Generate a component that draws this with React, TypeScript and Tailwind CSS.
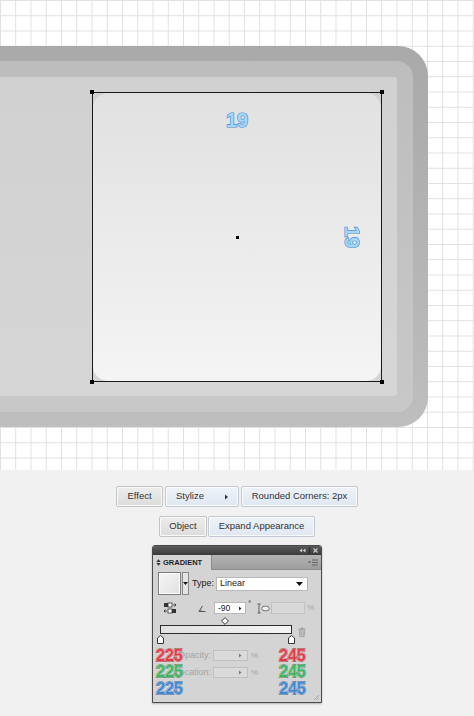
import React from 'react'

// small drawings used in the gradient panel
function ReverseIcon() {
  return (
    <svg width="14" height="12" viewBox="0 0 14 12">
      <rect x="1" y="1" width="4" height="4" fill="#333" />
      <rect x="5" y="1" width="4" height="4" fill="#fff" stroke="#333" strokeWidth="0.8" />
      <path d="M10 3h3M11.6 1.6 13 3l-1.4 1.4" stroke="#333" strokeWidth="0.9" fill="none" />
      <path d="M1 9h3M2.4 7.6 1 9l1.4 1.4" stroke="#333" strokeWidth="0.9" fill="none" />
      <rect x="5" y="7" width="4" height="4" fill="#fff" stroke="#333" strokeWidth="0.8" />
      <rect x="9" y="7" width="4" height="4" fill="#333" />
    </svg>
  )
}

function AngleIcon() {
  return (
    <svg width="8" height="7" viewBox="0 0 8 7">
      <path d="M1 6.5h6.5M1 6.5 4.5 1" stroke="#444" strokeWidth="0.9" fill="none" />
      <path d="M3 6.5a2.2 2.2 0 0 0-0.6-2" stroke="#444" strokeWidth="0.8" fill="none" />
    </svg>
  )
}

function AspectIcon() {
  return (
    <svg width="13" height="11" viewBox="0 0 13 11">
      <path d="M2 1v9M0.5 1h3M0.5 10h3" stroke="#555" strokeWidth="0.9" fill="none" />
      <ellipse cx="8.5" cy="5.5" rx="3.8" ry="2.4" fill="#eee" stroke="#666" strokeWidth="0.9" />
    </svg>
  )
}

function TrashIcon() {
  return (
    <svg width="8" height="10" viewBox="0 0 8 10">
      <path d="M0.5 2h7M3 2V1h2v1" stroke="#999" strokeWidth="0.8" fill="none" />
      <path d="M1.3 2.8h5.4l-0.5 6.7H1.8z" fill="#c8c8c8" stroke="#999" strokeWidth="0.8" />
      <path d="M3 4v4.5M5 4v4.5" stroke="#999" strokeWidth="0.6" />
    </svg>
  )
}

function StopIcon() {
  return (
    <svg width="7" height="9" viewBox="0 0 7 9">
      <path d="M3.5 0.5 6.5 3v5.5h-6V3z" fill="#fff" stroke="#222" strokeWidth="0.9" />
    </svg>
  )
}

function Btn({ w, blue, children }: { w: string; blue?: boolean; children: React.ReactNode }) {
  return (
    <div
      className={`${w} h-full flex items-center justify-center rounded-[2px] border text-[9.5px] text-[#333] shadow-[inset_0_0_0_1px_#fafafa] ${
        blue
          ? 'border-[#c2c9d2] bg-linear-to-b from-[#eef3f9] to-[#dfe7f1]'
          : 'border-[#c4c4c4] bg-linear-to-b from-[#ededed] to-[#dcdcdc]'
      }`}
    >
      {children}
    </div>
  )
}

function Key() {
  return (
    <div className="relative w-[290px] h-[290px] p-px">
      <div className="h-full rounded-[15px] bg-linear-to-b from-[#e1e1e1] to-[#f4f4f4]" />

      {/* selection box */}
      <div className="absolute inset-0 border border-[#1a1a1a]" />
      <div className="absolute -left-[2px] -top-[2px] w-[4px] h-[4px] bg-black" />
      <div className="absolute -right-[2px] -top-[2px] w-[4px] h-[4px] bg-black" />
      <div className="absolute -left-[2px] -bottom-[2px] w-[4px] h-[4px] bg-black" />
      <div className="absolute -right-[2px] -bottom-[2px] w-[4px] h-[4px] bg-black" />
      <div className="absolute left-[144px] top-[144px] w-[3px] h-[3px] bg-black" />

      {/* size labels */}
      <div className="absolute left-0 top-[18px] w-full text-center text-[20px] leading-none font-bold text-[#a9d4f4] [-webkit-text-stroke:1.2px_#3d8fd4] [paint-order:stroke_fill]">
        19
      </div>
      <div className="absolute left-[260px] top-[145px] -translate-x-1/2 -translate-y-1/2 rotate-90 text-[20px] leading-none font-bold text-[#a9d4f4] [-webkit-text-stroke:1.2px_#3d8fd4] [paint-order:stroke_fill]">
        19
      </div>
    </div>
  )
}

function Canvas() {
  return (
    <div className="h-[470px] pt-[46px] bg-white bg-[linear-gradient(to_right,#e0e0e0_1px,transparent_1px),linear-gradient(to_bottom,#e0e0e0_1px,transparent_1px)] bg-[size:15.25px_15.25px]">
      <div className="w-[428px] h-[381px] rounded-r-[30px] bg-linear-to-b from-[#a9a9a9] to-[#bebebe] py-[15px] pr-[15px]">
        <div className="h-full rounded-r-[16px] bg-linear-to-b from-[#bdbdbd] to-[#c8c8c8] py-[16px] pr-[16px]">
          <div className="h-full rounded-r-[3px] bg-linear-to-b from-[#d1d1d1] to-[#d6d6d6] pl-[92px] pt-[15px]">
            <Key />
          </div>
        </div>
      </div>
    </div>
  )
}

const num = 'absolute text-[16px] leading-none font-bold [paint-order:stroke_fill] [text-shadow:0_0_1px_#fff,0_0_2px_#fff]'

function GradientPanel() {
  return (
    <div className="w-[170px] h-[158px] flex flex-col rounded-t-[3px] border border-[#4a4a4a] bg-[#d4d4d4] text-[9px] text-[#222] shadow-[0_1px_2px_rgba(0,0,0,0.25)]">
      {/* title bar */}
      <div className="h-[9px] rounded-t-[2px] bg-linear-to-b from-[#5a5a5a] to-[#3b3b3b] flex items-center justify-end pr-[3px] gap-[3px]">
        <svg width="7" height="5" viewBox="0 0 7 5">
          <path d="M3.2 0.5v4L0.5 2.5zM6.5 0.5v4L3.8 2.5z" fill="#cfcfcf" />
        </svg>
        <div className="w-px h-[7px] bg-[#2a2a2a]" />
        <svg width="5" height="5" viewBox="0 0 5 5">
          <path d="M0.5 0.5l4 4M4.5 0.5l-4 4" stroke="#d0d0d0" strokeWidth="1.1" />
        </svg>
      </div>

      {/* tab row */}
      <div className="h-[15px] flex">
        <div className="w-[58px] bg-[#d4d4d4] flex items-center pl-[3px] gap-[2px] font-bold text-[7.5px] text-[#1e1e1e]">
          <svg width="5" height="7" viewBox="0 0 5 7">
            <path d="M2.5 0.3 4.7 3H0.3zM2.5 6.7 4.7 4H0.3z" fill="#333" />
          </svg>
          GRADIENT
        </div>
        <div className="flex-1 flex justify-end items-center pr-[3px] bg-linear-to-b from-[#b3b3b3] to-[#9d9d9d] border-b border-l border-[#8c8c8c]">
          <svg width="10" height="7" viewBox="0 0 10 7">
            <path d="M0 2.5h3L1.5 4z" fill="#444" />
            <path d="M4 1h6M4 3.5h6M4 6h6" stroke="#666" strokeWidth="1.2" />
          </svg>
        </div>
      </div>

      {/* body */}
      <div className="flex-1 relative pl-[5px]">
        <div className="mt-[2px] h-[23px] flex items-center">
          <div className="w-[23px] h-[23px] border border-[#7c7c7c] bg-linear-to-br from-[#f6f6f6] to-[#e0e0e0] shadow-[inset_0_0_0_1px_#fff]" />
          <div className="ml-[1px] w-[7px] h-[23px] border border-[#8a8a8a] bg-[#e4e4e4] flex items-center justify-center">
            <svg width="5" height="3" viewBox="0 0 5 3">
              <path d="M0 0h5L2.5 3z" fill="#111" />
            </svg>
          </div>
          <div className="ml-[3px] w-[24px]">Type:</div>
          <div className="w-[92px] h-[14px] bg-white border border-[#b8b8b8] flex items-center pl-[3px] pr-[4px]">
            <span className="flex-1">Linear</span>
            <svg width="7" height="4" viewBox="0 0 7 4">
              <path d="M0 0h7L3.5 4z" fill="#111" />
            </svg>
          </div>
        </div>

        <div className="mt-[7px] h-[12px] flex items-center">
          <div className="ml-[5px]"><ReverseIcon /></div>
          <div className="ml-[21px]"><AngleIcon /></div>
          <div className="ml-[8px] w-[32px] h-[12px] bg-white border border-[#b8b8b8] flex items-center pl-[3px]">
            <span className="flex-1 text-[8.5px]">-90</span>
            <svg width="6" height="5" viewBox="0 0 6 5" className="mr-[2px]">
              <path d="M2 0.5v4l2.5-2z" fill="#333" />
            </svg>
          </div>
          <div className="ml-[2px] self-start text-[8px] leading-none -mt-[2px]">°</div>
          <div className="ml-[6px]"><AspectIcon /></div>
          <div className="ml-[1px] w-[34px] h-[12px] bg-[#d9d9d9] border border-[#c2c2c2]" />
          <div className="ml-[2px] text-[8px] text-[#a9a9a9]">%</div>
        </div>

        <div className="mt-[3px] h-[8px] flex items-center">
          <svg width="8" height="8" viewBox="0 0 8 8" className="ml-[63px]">
            <path d="M4 0.6 7.4 4 4 7.4 0.6 4z" fill="#fff" stroke="#222" strokeWidth="0.9" />
          </svg>
        </div>

        <div className="h-[10px] flex items-start">
          <div className="ml-[2px] w-[132px] h-[9px] border border-[#2d2d2d] bg-linear-to-r from-[#e1e1e1] to-[#f5f5f5]" />
          <div className="ml-[6px] mt-[2px]"><TrashIcon /></div>
        </div>

        <div className="h-[9px] flex">
          <div className="-ml-[1px]"><StopIcon /></div>
          <div className="ml-[124px]"><StopIcon /></div>
        </div>

        <div className="mt-[6px] h-[11px] flex items-center">
          <div className="w-[55px] text-right pr-[2px] text-[#a3a3a3]">Opacity:</div>
          <div className="w-[35px] h-[11px] bg-[#dadada] border border-[#c0c0c0] flex items-center justify-end pr-[4px]">
            <svg width="5" height="5" viewBox="0 0 5 5">
              <path d="M1 0.5v4l2.5-2z" fill="#777" />
            </svg>
          </div>
          <div className="ml-[3px] text-[8px] text-[#a3a3a3]">%</div>
        </div>

        <div className="mt-[6px] h-[11px] flex items-center">
          <div className="w-[55px] text-right pr-[2px] text-[#a3a3a3]">Location:</div>
          <div className="w-[35px] h-[11px] bg-[#dadada] border border-[#c0c0c0] flex items-center justify-end pr-[4px]">
            <svg width="5" height="5" viewBox="0 0 5 5">
              <path d="M1 0.5v4l2.5-2z" fill="#777" />
            </svg>
          </div>
          <div className="ml-[3px] text-[8px] text-[#a3a3a3]">%</div>
        </div>

        {/* colour values */}
        <div className={`${num} left-[3px] top-[78px] text-[#e23a46] [-webkit-text-stroke:1.4px_#8e1a22]`}>225</div>
        <div className={`${num} left-[3px] top-[94px] text-[#3fb45e] [-webkit-text-stroke:1.4px_#1b6a33]`}>225</div>
        <div className={`${num} left-[3px] top-[111px] text-[#3f87d2] [-webkit-text-stroke:1.4px_#1d4f86]`}>225</div>
        <div className={`${num} left-[126px] top-[78px] text-[#e23a46] [-webkit-text-stroke:1.4px_#8e1a22]`}>245</div>
        <div className={`${num} left-[126px] top-[94px] text-[#3fb45e] [-webkit-text-stroke:1.4px_#1b6a33]`}>245</div>
        <div className={`${num} left-[126px] top-[111px] text-[#3f87d2] [-webkit-text-stroke:1.4px_#1d4f86]`}>245</div>

        {/* resize grip */}
        <svg width="6" height="6" viewBox="0 0 6 6" className="absolute right-[2px] bottom-[2px]">
          <path d="M6 1 1 6M6 3.5 3.5 6" stroke="#9a9a9a" strokeWidth="0.8" />
        </svg>
      </div>
    </div>
  )
}

function Controls() {
  return (
    <div className="h-[246px] bg-[#f1f1f1] flex flex-col items-center pt-[16px]">
      <div className="flex gap-[2px] h-[21px]">
        <Btn w="w-[47px]">Effect</Btn>
        <Btn w="w-[74px]" blue>
          <span className="flex-1 pl-[10px]">Stylize</span>
          <svg width="5" height="6" viewBox="0 0 5 6" className="mr-[9px]">
            <path d="M1 0.5v5l3-2.5z" fill="#333" />
          </svg>
        </Btn>
        <Btn w="w-[117px]" blue>Rounded Corners: 2px</Btn>
      </div>
      <div className="flex gap-[1px] h-[21px] mt-[9px]">
        <Btn w="w-[48px]">Object</Btn>
        <Btn w="w-[107px]" blue>Expand Appearance</Btn>
      </div>
      <div className="mt-[8px]">
        <GradientPanel />
      </div>
    </div>
  )
}

export default function App() {
  return (
    <div className="w-[474px] h-[716px] overflow-hidden font-['Liberation_Sans',Arial,sans-serif]">
      <Canvas />
      <Controls />
    </div>
  )
}
